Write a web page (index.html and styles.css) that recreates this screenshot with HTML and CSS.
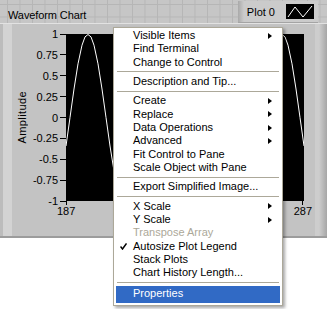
FILE: index.html
```html
<!DOCTYPE html>
<html lang="en">
<head>
    <meta charset="UTF-8">
    <title>Waveform Chart</title>
    <link rel="stylesheet" href="styles.css">
</head>
<body>
    <div class="panel">
        <div class="panel-top">
            <span class="chart-label">Waveform Chart</span>
            <div class="legend">
                <span class="legend-name">Plot 0</span>
                <svg class="legend-swatch" width="28" height="15" viewBox="0 0 28 15">
                    <polyline points="2,13 9,3 17,13 26,2" fill="none" stroke="#fff" stroke-width="1"/>
                </svg>
            </div>
        </div>

        <div class="chart">
            <div class="axis-title"><span>Amplitude</span></div>
            <div class="y-scale">
                <div class="y-mark">1</div>
                <div class="y-mark">0.75</div>
                <div class="y-mark">0.5</div>
                <div class="y-mark">0.25</div>
                <div class="y-mark">0</div>
                <div class="y-mark">-0.25</div>
                <div class="y-mark">-0.5</div>
                <div class="y-mark">-0.75</div>
                <div class="y-mark">-1</div>
            </div>
            <div class="plot-col">
                <svg class="plot" width="238" height="167" viewBox="0 0 238 167">
                    <polyline fill="none" stroke="#fff" stroke-width="1"
                        points="0,112 4,83.5 8,55 12,29.8 16,11.2 19,2.9 22,0.5 25,2.9 28,11.2 32,29.8 36,55 40,83.5 44,112 48,137 52,156"/>
                    <polyline fill="none" stroke="#fff" stroke-width="1"
                        points="202,55 206,29.8 210,11.2 213,2.9 216,0.5 219,2.9 222,11.2 226,29.8 230,55 234,83.5 238,112"/>
                </svg>
                <div class="x-scale">
                    <span class="x-mark">187</span>
                    <span class="x-mark">287</span>
                </div>
            </div>
        </div>
    </div>

    <ul class="menu">
        <li class="item sub">Visible Items</li>
        <li class="item">Find Terminal</li>
        <li class="item">Change to Control</li>
        <li class="sep"></li>
        <li class="item">Description and Tip...</li>
        <li class="sep"></li>
        <li class="item sub">Create</li>
        <li class="item sub">Replace</li>
        <li class="item sub">Data Operations</li>
        <li class="item sub">Advanced</li>
        <li class="item">Fit Control to Pane</li>
        <li class="item">Scale Object with Pane</li>
        <li class="sep"></li>
        <li class="item">Export Simplified Image...</li>
        <li class="sep"></li>
        <li class="item sub">X Scale</li>
        <li class="item sub">Y Scale</li>
        <li class="item disabled">Transpose Array</li>
        <li class="item checked">
            <svg class="check" width="7" height="7" viewBox="0 0 7 7"><polyline points="0.5,3.5 2.5,6 6.5,0.5" fill="none" stroke="#000" stroke-width="1.5"/></svg>Autosize Plot Legend
        </li>
        <li class="item">Stack Plots</li>
        <li class="item">Chart History Length...</li>
        <li class="sep"></li>
        <li class="item active">Properties</li>
    </ul>
</body>
</html>
```

FILE: styles.css
```css
body {
    margin: 0;
    width: 327px;
    height: 309px;
    background: #fff;
    font-family: "Liberation Sans", Arial, sans-serif;
    font-size: 11px;
    color: #000;
    overflow: hidden;
}

/* front panel */
.panel {
    width: 327px;
}
.panel-top {
    height: 23px;
    display: flex;
    align-items: center;
    justify-content: space-between;
    padding: 0 9px 0 8px;
    box-sizing: border-box;
    background-color: #c6c6c6;
    background-image:
        linear-gradient(to right, #b6b6b6 1px, transparent 1px),
        linear-gradient(to bottom, #b6b6b6 1px, transparent 1px);
    background-size: 12.5px 12.5px;
    background-position: 7px 4px;
}
.chart-label {
    align-self: flex-end;
    line-height: 13px;
    margin-bottom: 1px;
    letter-spacing: -0.1px;
}
.legend {
    display: flex;
    align-items: center;
    gap: 11px;
    height: 21px;
    margin-top: 1px;
    padding: 0 4px 0 9px;
    background: linear-gradient(to right, #a9a9a9, #cbcbcb 6px, #cbcbcb);
    border-bottom: 1px solid #a4a4a4;
}
.legend-swatch {
    display: block;
    background: #000;
}

/* chart frame */
.chart {
    display: flex;
    height: 215px;
    box-sizing: border-box;
    padding: 10px 0 0 12px;
    border-top: 1px solid #e2e2e2;
    border-bottom: 2px solid #9c9c9c;
    background: linear-gradient(to right, #bcbcbc 0 3px, #d3d3d3 3px 12px, #c3c3c3 12px 315px, #cdcdcd 315px 319px, #a6a6a6 327px);
}
.axis-title {
    width: 20px;
    height: 167px;
    display: flex;
    align-items: center;
    justify-content: center;
}
.axis-title span {
    writing-mode: vertical-rl;
    transform: rotate(180deg);
    letter-spacing: 0.4px;
}
.y-scale {
    width: 34px;
    height: 180px;
    margin-top: -6.5px;
    display: flex;
    flex-direction: column;
    justify-content: space-between;
}
.y-mark {
    height: 13px;
    display: flex;
    align-items: center;
    justify-content: flex-end;
    gap: 2px;
}
.y-mark::after {
    content: "";
    width: 6px;
    height: 1px;
    background: #000;
}
.plot-col {
    width: 238px;
}
.plot {
    display: block;
    background: #000;
}
.x-scale {
    display: flex;
    justify-content: space-between;
    margin: 0 -8px 0 -9px;
}
.x-mark {
    display: flex;
    flex-direction: column;
    align-items: center;
}
.x-mark::before {
    content: "";
    width: 1px;
    height: 4px;
    background: #000;
}

/* context menu */
.menu {
    position: absolute;
    left: 113px;
    top: 27px;
    width: 170px;
    box-sizing: border-box;
    margin: 0;
    padding: 1px 2px 2px;
    list-style: none;
    background: #fff;
    border: 1px solid #aca899;
    box-shadow: 2px 2px 3px rgba(0, 0, 0, 0.35);
}
.item {
    display: grid;
    grid-template-columns: 17px 1fr 12px;
    align-items: center;
    height: 13.33px;
    line-height: 13.33px;
    white-space: nowrap;
}
.item::before {
    content: "";
}
.checked::before {
    display: none;
}
.check {
    display: block;
    margin-left: 4px;
}
.sub::after {
    content: "";
    justify-self: start;
    width: 0;
    height: 0;
    border-left: 4px solid #000;
    border-top: 3.5px solid transparent;
    border-bottom: 3.5px solid transparent;
}
.disabled {
    color: #aca899;
}
.active {
    height: 17px;
    background: #316ac5;
    color: #fff;
}
.sep {
    height: 6px;
    display: flex;
    align-items: center;
    padding: 0 1px;
}
.sep::after {
    content: "";
    flex: 1;
    height: 1px;
    background: #aca899;
}
```
